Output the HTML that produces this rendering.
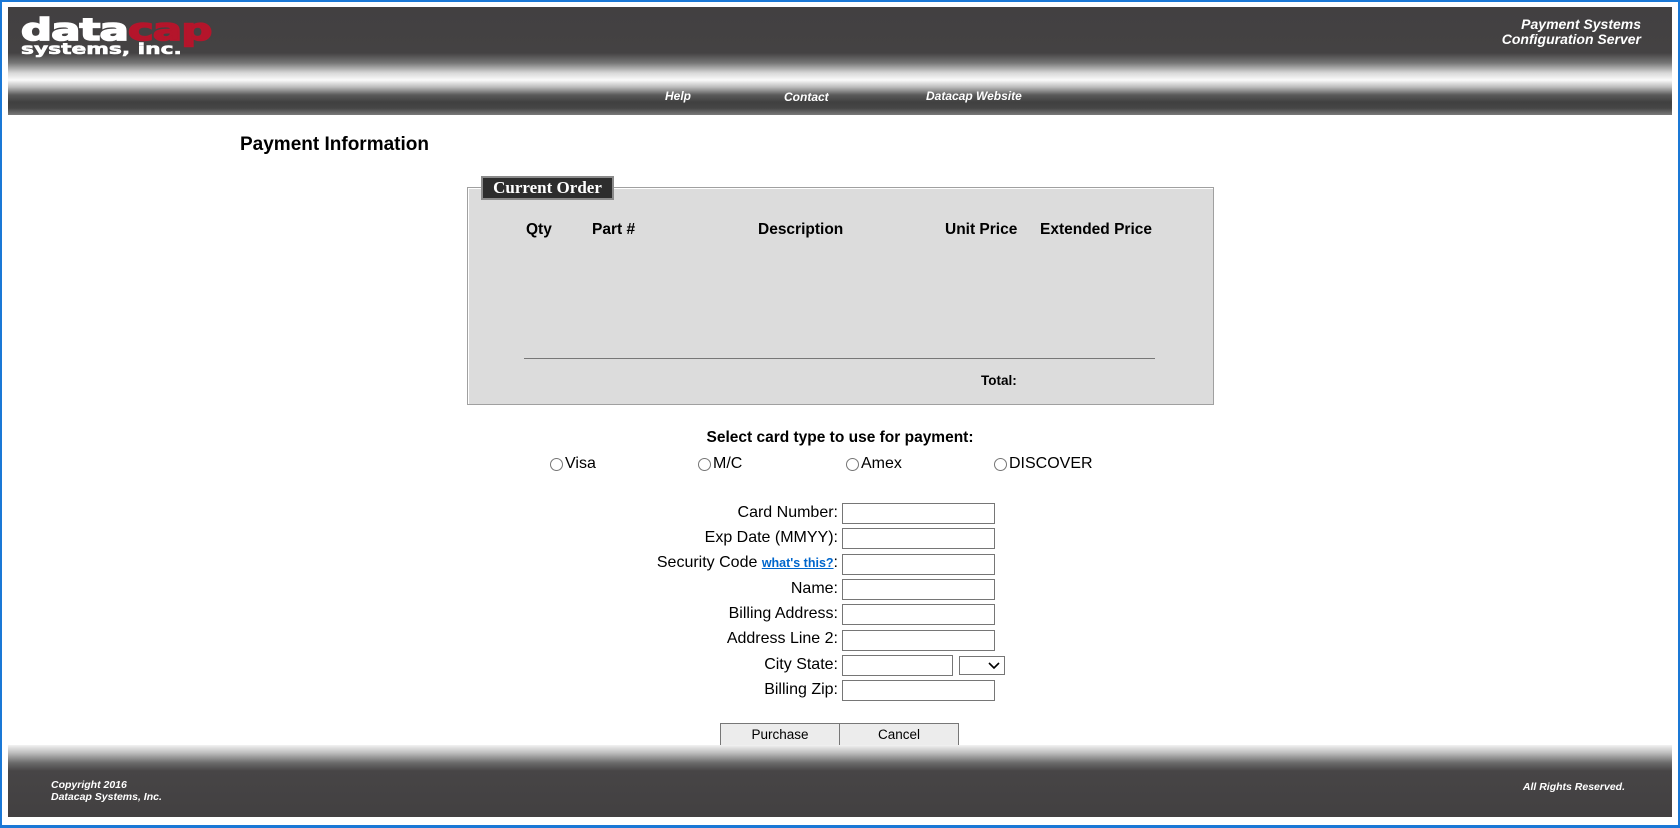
<!DOCTYPE html>
<html><head><meta charset="utf-8"><style>
*{margin:0;padding:0;box-sizing:border-box}
body{width:1680px;height:828px;background:#fff;position:relative;overflow:hidden;font-family:"Liberation Sans",Arial,sans-serif;color:#000}
.frame{position:absolute;inset:0;border:2px solid #1a78d6;border-bottom-width:3px}
.hdr{position:absolute;left:8px;right:8px;top:7px;height:108px;background:linear-gradient(to bottom,#424041 0px,#444243 46px,#777 56px,#d8d8d8 66px,#fafafa 73px,#bdbdbd 80px,#5a5a5a 88px,#404040 95px,#454545 101px,#7a7a7a 108px)}
.ftr{position:absolute;left:8px;right:8px;top:745px;height:72px;background:linear-gradient(to bottom,#f2f2f2 0px,#bcbcbc 8px,#6a6a6a 18px,#474546 26px,#424041 72px)}
.a{position:absolute;white-space:nowrap}
.wi{color:#fff;font-weight:bold;font-style:italic}
.logo1{left:13px;top:9px;font-family:"DejaVu Sans",sans-serif;font-weight:bold;font-size:30px;letter-spacing:-0.5px;transform:scaleX(1.44);transform-origin:left top;line-height:30px}
.logo1 span{-webkit-text-stroke:1.6px currentColor}
.logo2{left:13px;top:35px;font-family:"DejaVu Sans",sans-serif;font-weight:bold;font-size:15px;color:#fff;-webkit-text-stroke:0.6px #fff;transform:scaleX(1.45);transform-origin:left top;line-height:15px}
fieldset{position:absolute;left:467px;top:187px;width:747px;height:218px;background:#dcdcdc;border:1px solid #a0a0a0;box-shadow:inset 1px 1px 0 #fff,1px 1px 0 #fff}
.legend{position:absolute;left:481px;top:176px;width:133px;height:24px;background:#2d2d2d;border:2px solid #8a8a8a;color:#fff;font-family:"Liberation Serif",serif;font-weight:bold;font-size:17px;line-height:20px;text-align:center}
.th{font-weight:bold;font-size:15.5px;top:221px}
.lbl{position:absolute;right:842px;font-size:16px;white-space:nowrap;text-align:right}
.in{position:absolute;left:842px;width:153px;height:21px;border:1px solid #767676;background:#fff}
.rad{position:absolute;top:458px;width:13px;height:13px;border:1px solid #767676;border-radius:50%;background:#fff}
.rl{top:455px;font-size:16px}
.btn{position:absolute;top:723px;width:120px;height:23px;background:#ececec;border:1px solid #777;font-size:13.5px;text-align:center;line-height:21px}
</style></head><body>
<div class="frame"></div>
<div class="hdr">
 <div class="a logo1"><span style="color:#fff">data</span><span style="color:#b5152b">cap</span></div>
 <div class="a logo2">systems, inc.</div>
 <div class="a wi" style="right:31px;top:10px;font-size:14px;line-height:15px;text-align:right">Payment Systems<br>Configuration Server</div>
 <div class="a wi" style="left:657px;top:82px;font-size:12px">Help</div>
 <div class="a wi" style="left:776px;top:83px;font-size:12px">Contact</div>
 <div class="a wi" style="left:918px;top:82px;font-size:12px">Datacap Website</div>
</div>
<div class="a" style="left:240px;top:134px;font-size:19px;font-weight:bold">Payment Information</div>
<fieldset></fieldset>
<div class="legend">Current Order</div>
<div class="a th" style="left:526px">Qty</div>
<div class="a th" style="left:592px">Part #</div>
<div class="a th" style="left:758px">Description</div>
<div class="a th" style="left:945px">Unit Price</div>
<div class="a th" style="left:1040px">Extended Price</div>
<div class="a" style="left:524px;top:358px;width:631px;height:1px;background:#777"></div>
<div class="a" style="left:981px;top:373px;font-size:13.5px;font-weight:bold">Total:</div>
<div class="a" style="left:0;width:1680px;text-align:center;top:429px;font-size:15.5px;font-weight:bold">Select card type to use for payment:</div>
<div class="rad" style="left:550px"></div><div class="a rl" style="left:565px">Visa</div>
<div class="rad" style="left:698px"></div><div class="a rl" style="left:713px">M/C</div>
<div class="rad" style="left:846px"></div><div class="a rl" style="left:861px">Amex</div>
<div class="rad" style="left:994px"></div><div class="a rl" style="left:1009px">DISCOVER</div>

<div class="lbl" style="top:504px">Card Number:</div><div class="in" style="top:503px"></div>
<div class="lbl" style="top:529px">Exp Date (MMYY):</div><div class="in" style="top:528px"></div>
<div class="lbl" style="top:554px">Security Code <a style="color:#0066cc;font-size:12.5px;font-weight:bold;text-decoration:underline">what's this?</a>:</div><div class="in" style="top:554px"></div>
<div class="lbl" style="top:580px">Name:</div><div class="in" style="top:579px"></div>
<div class="lbl" style="top:605px">Billing Address:</div><div class="in" style="top:604px"></div>
<div class="lbl" style="top:630px">Address Line 2:</div><div class="in" style="top:630px"></div>
<div class="lbl" style="top:656px">City State:</div><div class="in" style="top:655px;width:111px"></div>
<div class="in" style="top:656px;left:959px;width:46px;height:19px">
 <svg style="position:absolute;right:4px;top:5px" width="12" height="8" viewBox="0 0 12 8"><path d="M1 1 L6 6 L11 1" stroke="#000" stroke-width="1.6" fill="none"/></svg></div>
<div class="lbl" style="top:681px">Billing Zip:</div><div class="in" style="top:680px"></div>
<div class="btn" style="left:720px">Purchase</div>
<div class="btn" style="left:839px">Cancel</div>
<div class="ftr">
 <div class="a wi" style="left:43px;top:35px;font-size:10.5px;line-height:11.5px">Copyright 2016<br>Datacap Systems, Inc.</div>
 <div class="a wi" style="right:47px;top:36px;font-size:10.5px">All Rights Reserved.</div>
</div>
</body></html>
